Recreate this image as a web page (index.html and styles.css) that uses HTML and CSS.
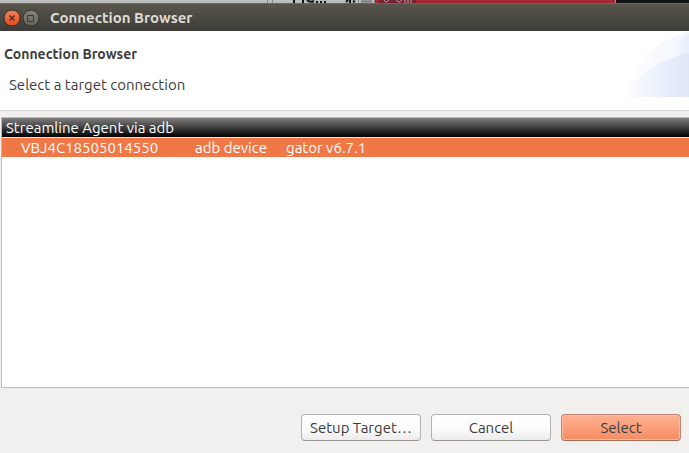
FILE: index.html
```html
<!DOCTYPE html>
<html lang="en">
<head>
<meta charset="utf-8">
<title>Connection Browser</title>
<link rel="stylesheet" href="styles.css">
</head>
<body>
<div class="backdrop" aria-hidden="true">
  <svg class="backdrop-art" height="3">
    <rect width="376" height="3" fill="#bebdbd"/>
    <path d="M267.500 0v3M272.500 0v3M358.500 0v3M374.500 0v3" stroke="#858484"/>
    <path d="M294 0v3M303 0v3" stroke="#111" stroke-width="2"/>
    <path d="M307 0q3 3 7 1M317 1v2M321 1v2M325 1v2M346 2l2 -2M350 0v3M353 1l2 1" stroke="#111" stroke-width="2" fill="none"/>
    <path d="M361 1.500h11" stroke="#777" stroke-width="2"/>
    <rect x="375" width="241" height="3" fill="#a52734"/>
    <rect x="379" width="37" height="3" fill="#702331"/>
    <path d="M384 0q2 4 5 0M396 0q3 4 6 0M405 0v3M408 0v3M411 0v3" stroke="#c9a8ac" fill="none"/>
    <rect x="615" width="1" height="3" fill="#999"/>
    <rect x="616" width="100%" height="3" fill="#131313"/>
  </svg>
</div>
<div class="dialog">
  <header class="titlebar">
    <button class="window-button" aria-label="Close">
      <svg width="18" height="18" viewBox="0 0 18 18">
        <defs>
          <linearGradient id="close-fill" x2="0" y2="1"><stop stop-color="#f5825c"/><stop offset="1" stop-color="#e34c1c"/></linearGradient>
        </defs>
        <circle cx="9" cy="9" r="8" fill="url(#close-fill)" stroke="#35322c"/>
        <path d="M6.500 6.500l5 5M11.500 6.500l-5 5" stroke="#56301f" stroke-width="1.500"/>
      </svg>
    </button>
    <button class="window-button" aria-label="Maximize">
      <svg width="18" height="18" viewBox="0 0 18 18">
        <defs>
          <linearGradient id="max-fill" x2="0" y2="1"><stop stop-color="#858379"/><stop offset="1" stop-color="#64635c"/></linearGradient>
        </defs>
        <circle cx="9" cy="9" r="8" fill="url(#max-fill)" stroke="#35342f"/>
        <path d="M5.500 6.500h6v6h-6z" fill="none" stroke="#3b3a35"/>
      </svg>
    </button>
    <h1 class="window-title">Connection Browser</h1>
  </header>
  <section class="banner">
    <div class="banner-text">
      <h2 class="banner-title">Connection Browser</h2>
      <p class="banner-message">Select a target connection</p>
    </div>
    <svg class="banner-art" width="66" height="66" viewBox="0 0 66 66" aria-hidden="true">
      <defs>
        <linearGradient id="back-arc"><stop stop-color="#fff"/><stop offset="1" stop-color="#f1f5fd"/></linearGradient>
        <linearGradient id="side-arc"><stop offset=".5" stop-color="#f6f9fe"/><stop offset="1" stop-color="#e8eefb"/></linearGradient>
        <linearGradient id="front-arc"><stop stop-color="#fff"/><stop offset=".3" stop-color="#f2f6fe"/><stop offset="1" stop-color="#dfe6f8"/></linearGradient>
      </defs>
      <path d="M0 66C7 35 32 8 66 1V66z" fill="url(#back-arc)"/>
      <path d="M34 50C42 28 52 12 66 3V50z" fill="url(#side-arc)"/>
      <path d="M0 66C14 44 39 27 66 22V66z" fill="url(#front-arc)"/>
    </svg>
  </section>
  <main class="content">
    <div class="tree">
      <table class="connections">
        <colgroup><col class="col-serial"><col class="col-kind"><col></colgroup>
        <thead><tr><th colspan="3">Streamline Agent via adb</th></tr></thead>
        <tbody><tr class="selected"><td>VBJ4C18505014550</td><td>adb device</td><td>gator v6.7.1</td></tr></tbody>
      </table>
    </div>
  </main>
  <footer class="actions">
    <button class="button">Setup Target…</button>
    <button class="button">Cancel</button>
    <button class="button primary">Select</button>
  </footer>
</div>
</body>
</html>
```
FILE: styles.css
```css
* { box-sizing: border-box; }

body {
  margin: 0;
  height: 100vh;
  display: flex;
  flex-direction: column;
  overflow: hidden;
  background: #f1f0ee;
  color: #3c3c3c;
  font: 15px/20px Ubuntu, "Open Sans", sans-serif;
}

h1, h2, p { margin: 0; }

button { font: inherit; color: inherit; }

.backdrop { height: 3px; background: #131313; }

.backdrop-art { display: block; width: 100%; }

.dialog {
  flex: 1;
  display: flex;
  flex-direction: column;
}

.titlebar {
  display: flex;
  align-items: center;
  gap: 1px;
  height: 28px;
  padding: 0 3px;
  border-top: 1px solid #6a675b;
  background: linear-gradient(#58564c, #3d3c38);
}

.window-button {
  width: 18px;
  height: 18px;
  padding: 0;
  border: 0;
  background: none;
}

.window-button svg { display: block; }

.window-title {
  margin-left: 9px;
  color: #dfdbd2;
  font-size: 15px;
  line-height: 20px;
}

.banner {
  display: flex;
  justify-content: space-between;
  height: 80px;
  background: #fff;
  border-bottom: 1px solid #d9d8d7;
}

.banner-text {
  display: flex;
  flex-direction: column;
  gap: 11px;
  padding: 13px 4px;
}

.banner-title { font-size: 14px; line-height: 20px; }

.banner-message { padding-left: 5px; }

.content {
  flex: 1;
  display: flex;
  padding: 6px 0 0 1px;
}

.tree {
  flex: 1;
  background: #fff;
  border: 1px solid #bcbbb9;
  border-right: 0;
}

.connections {
  width: 100%;
  table-layout: fixed;
  border-spacing: 0;
  color: #fff;
  text-align: left;
  white-space: nowrap;
}

.col-serial { width: 189px; }

.col-kind { width: 91px; }

.connections th {
  height: 20px;
  padding: 0 4px;
  border-bottom: 1px solid #e6e6e6;
  background: linear-gradient(#7d7d7d, #000);
  font-weight: 400;
  line-height: 19px;
}

.connections td {
  height: 19px;
  padding: 0 4px;
  background: #f07746;
  line-height: 19px;
}

.connections td:first-child { padding-left: 19px; }

.actions {
  display: flex;
  justify-content: flex-end;
  gap: 10px;
  padding: 26px 8px 12px;
}

.button {
  width: 120px;
  height: 27px;
  padding: 0;
  border: 1px solid #b5b3b0;
  border-bottom-color: #999794;
  border-radius: 4px;
  background: linear-gradient(#fff, #fbfbfb 55%, #ececeb);
  line-height: 20px;
}

.primary {
  border-color: #b98874;
  border-bottom-color: #a06c56;
  background: linear-gradient(#ffb193, #f58c62);
  box-shadow: inset 0 0 0 1px #ffb99e;
}
```
